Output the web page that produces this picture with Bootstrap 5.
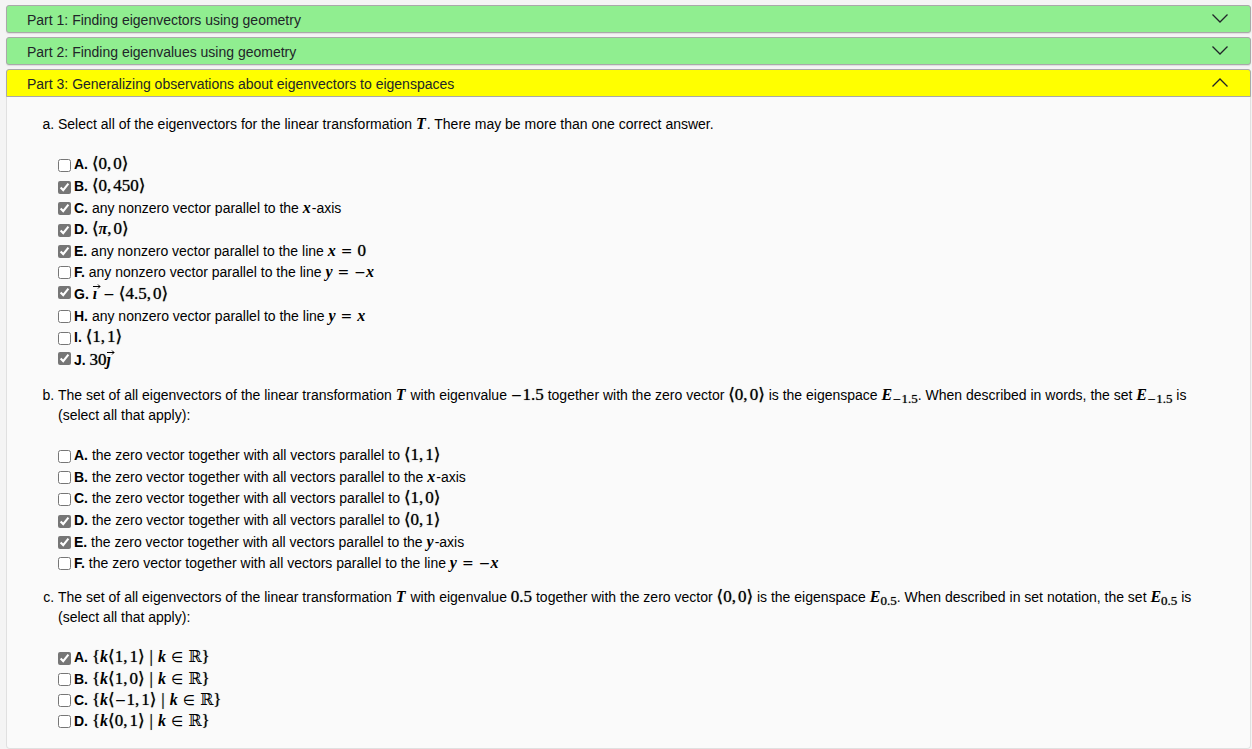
<!DOCTYPE html>
<html lang="en">
<head>
<meta charset="utf-8">
<meta name="viewport" content="width=device-width, initial-scale=1">
<title>Eigenvectors and eigenspaces</title>
<link href="https://cdn.jsdelivr.net/npm/bootstrap@5.3.0/dist/css/bootstrap.min.css" rel="stylesheet">
<style>
body{background:#f4f4f4;color:#000;font:14px/20px "Liberation Sans",Arial,sans-serif}
.parts{padding:5px 1px 0 6px;gap:4px}
.part-btn{height:28px;padding:2px 22px 0 20px;border:1px solid #a9a9a9;border-radius:3px;background:#90ee90;color:#212529;font-size:14px;line-height:20px;text-align:left;box-shadow:0 1px 1px #ddd}
.part-btn svg{margin-top:-4px}
.part-open{background:#ff0;border-radius:3px 3px 0 0}
.part-body{background:#fafafa;border:1px solid #e0e0e0;border-top:0;border-radius:0 0 4px 4px;padding:17px 40px 17px 51px}
.questions{list-style:lower-alpha;padding:0}
.question + .question{margin-top:14px}
.choices{margin-top:19px}
.choice{height:21px;gap:3px}
.choice.tall{height:22px}
.choice.arrowed{height:23px}
.choice input{width:13px;height:13px;margin:2px 0 0;accent-color:#767676}
.choice.arrowed input{margin:0 0 3px}
.choice.arrowed label{padding-top:1px}
.math{font:17px/16px "Liberation Serif","DejaVu Serif",serif;white-space:nowrap;text-shadow:0 0 1px #000a}
.math i{font-size:16px;font-weight:bold;text-shadow:none}
.math i:only-child{margin-right:1px}
.math sub{font-size:13px;line-height:0;bottom:-3px}
.math .rel{margin:0 5px}
.math .bin{margin:0 4px 0 6px}
.math .op{font-family:"DejaVu Serif",serif;font-size:14px;text-shadow:none}
.math sub .op{font-size:11px}
.math .set{font-family:"DejaVu Sans",sans-serif;font-size:14px;text-shadow:none}
.math .reals{font-family:"DejaVu Serif",serif;font-size:16px;text-shadow:none}
.math .sep{margin-right:2px}
.vec{position:relative;display:inline-block}
.vec svg{position:absolute;left:0;top:-2px}
</style>
</head>
<body>
<main class="parts d-flex flex-column">
  <button class="part-btn d-flex align-items-center justify-content-between w-100" type="button" aria-expanded="false">Part 1: Finding eigenvectors using geometry
    <svg width="16" height="9" viewBox="0 0 16 9" fill="none" stroke="#212529" stroke-width="1.3" aria-hidden="true"><path d="M.5.5 8 8 15.500.5"/></svg></button>
  <button class="part-btn d-flex align-items-center justify-content-between w-100" type="button" aria-expanded="false">Part 2: Finding eigenvalues using geometry
    <svg width="16" height="9" viewBox="0 0 16 9" fill="none" stroke="#212529" stroke-width="1.3" aria-hidden="true"><path d="M.5.5 8 8 15.500.5"/></svg></button>
  <section>
    <button class="part-btn part-open d-flex align-items-center justify-content-between w-100" type="button" aria-expanded="true" aria-controls="part3">Part 3: Generalizing observations about eigenvectors to eigenspaces
      <svg width="16" height="9" viewBox="0 0 16 9" fill="none" stroke="#212529" stroke-width="1.3" aria-hidden="true"><path d="M.5 8.500 8 1l7.500 7.500"/></svg></button>
    <div class="part-body" id="part3">
      <ol class="questions m-0">
        <li class="question">Select all of the eigenvectors for the linear transformation <span class="math"><i>T</i></span>. There may be more than one correct answer.
          <div class="choices">
            <div class="choice tall d-flex align-items-center"><input type="checkbox" id="a1"><label for="a1"><b>A.</b> <span class="math">⟨0,<span class="sep"></span>0⟩</span></label></div>
            <div class="choice tall d-flex align-items-center"><input type="checkbox" id="a2" checked><label for="a2"><b>B.</b> <span class="math">⟨0,<span class="sep"></span>450⟩</span></label></div>
            <div class="choice d-flex align-items-center"><input type="checkbox" id="a3" checked><label for="a3"><b>C.</b> any nonzero vector parallel to the <span class="math"><i>x</i></span>-axis</label></div>
            <div class="choice tall d-flex align-items-center"><input type="checkbox" id="a4" checked><label for="a4"><b>D.</b> <span class="math">⟨<i>π</i>,<span class="sep"></span>0⟩</span></label></div>
            <div class="choice d-flex align-items-center"><input type="checkbox" id="a5" checked><label for="a5"><b>E.</b> any nonzero vector parallel to the line <span class="math"><i>x</i><span class="rel op">=</span>0</span></label></div>
            <div class="choice d-flex align-items-center"><input type="checkbox" id="a6"><label for="a6"><b>F.</b> any nonzero vector parallel to the line <span class="math"><i>y</i><span class="rel op">=</span><span class="op">−</span><i>x</i></span></label></div>
            <div class="choice arrowed d-flex align-items-center"><input type="checkbox" id="a7" checked><label for="a7"><b>G.</b> <span class="math"><span class="vec"><i>ı</i><svg width="8" height="5" viewBox="0 0 8 5" fill="none" stroke="#000" aria-hidden="true"><path d="M0 2.500h7M5 .5l2 2-2 2"/></svg></span><span class="bin op">−</span>⟨4.5,<span class="sep"></span>0⟩</span></label></div>
            <div class="choice d-flex align-items-center"><input type="checkbox" id="a8"><label for="a8"><b>H.</b> any nonzero vector parallel to the line <span class="math"><i>y</i><span class="rel op">=</span><i>x</i></span></label></div>
            <div class="choice tall d-flex align-items-center"><input type="checkbox" id="a9"><label for="a9"><b>I.</b> <span class="math">⟨1,<span class="sep"></span>1⟩</span></label></div>
            <div class="choice arrowed d-flex align-items-center"><input type="checkbox" id="a10" checked><label for="a10"><b>J.</b> <span class="math">30<span class="vec"><i>ȷ</i><svg width="8" height="5" viewBox="0 0 8 5" fill="none" stroke="#000" aria-hidden="true"><path d="M0 2.500h7M5 .5l2 2-2 2"/></svg></span></span></label></div>
          </div>
        </li>
        <li class="question">The set of all eigenvectors of the linear transformation <span class="math"><i>T</i></span> with eigenvalue <span class="math"><span class="op">−</span>1.5</span> together with the zero vector <span class="math">⟨0,<span class="sep"></span>0⟩</span> is the eigenspace <span class="math"><i>E</i><sub><span class="op">−</span>1.5</sub></span>. When described in words, the set <span class="math"><i>E</i><sub><span class="op">−</span>1.5</sub></span> is (select all that apply):
          <div class="choices">
            <div class="choice tall d-flex align-items-center"><input type="checkbox" id="b1"><label for="b1"><b>A.</b> the zero vector together with all vectors parallel to <span class="math">⟨1,<span class="sep"></span>1⟩</span></label></div>
            <div class="choice d-flex align-items-center"><input type="checkbox" id="b2"><label for="b2"><b>B.</b> the zero vector together with all vectors parallel to the <span class="math"><i>x</i></span>-axis</label></div>
            <div class="choice tall d-flex align-items-center"><input type="checkbox" id="b3"><label for="b3"><b>C.</b> the zero vector together with all vectors parallel to <span class="math">⟨1,<span class="sep"></span>0⟩</span></label></div>
            <div class="choice tall d-flex align-items-center"><input type="checkbox" id="b4" checked><label for="b4"><b>D.</b> the zero vector together with all vectors parallel to <span class="math">⟨0,<span class="sep"></span>1⟩</span></label></div>
            <div class="choice d-flex align-items-center"><input type="checkbox" id="b5" checked><label for="b5"><b>E.</b> the zero vector together with all vectors parallel to the <span class="math"><i>y</i></span>-axis</label></div>
            <div class="choice d-flex align-items-center"><input type="checkbox" id="b6"><label for="b6"><b>F.</b> the zero vector together with all vectors parallel to the line <span class="math"><i>y</i><span class="rel op">=</span><span class="op">−</span><i>x</i></span></label></div>
          </div>
        </li>
        <li class="question">The set of all eigenvectors of the linear transformation <span class="math"><i>T</i></span> with eigenvalue <span class="math">0.5</span> together with the zero vector <span class="math">⟨0,<span class="sep"></span>0⟩</span> is the eigenspace <span class="math"><i>E</i><sub>0.5</sub></span>. When described in set notation, the set <span class="math"><i>E</i><sub>0.5</sub></span> is (select all that apply):
          <div class="choices">
            <div class="choice tall d-flex align-items-center"><input type="checkbox" id="c1" checked><label for="c1"><b>A.</b> <span class="math">{<i>k</i>⟨1,<span class="sep"></span>1⟩<span class="rel">|</span><i>k</i><span class="rel set">∈</span><span class="reals">ℝ</span>}</span></label></div>
            <div class="choice d-flex align-items-center"><input type="checkbox" id="c2"><label for="c2"><b>B.</b> <span class="math">{<i>k</i>⟨1,<span class="sep"></span>0⟩<span class="rel">|</span><i>k</i><span class="rel set">∈</span><span class="reals">ℝ</span>}</span></label></div>
            <div class="choice d-flex align-items-center"><input type="checkbox" id="c3"><label for="c3"><b>C.</b> <span class="math">{<i>k</i>⟨<span class="op">−</span>1,<span class="sep"></span>1⟩<span class="rel">|</span><i>k</i><span class="rel set">∈</span><span class="reals">ℝ</span>}</span></label></div>
            <div class="choice d-flex align-items-center"><input type="checkbox" id="c4"><label for="c4"><b>D.</b> <span class="math">{<i>k</i>⟨0,<span class="sep"></span>1⟩<span class="rel">|</span><i>k</i><span class="rel set">∈</span><span class="reals">ℝ</span>}</span></label></div>
          </div>
        </li>
      </ol>
    </div>
  </section>
</main>
<script src="https://cdn.jsdelivr.net/npm/bootstrap@5.3.0/dist/js/bootstrap.bundle.min.js"></script>
</body>
</html>
